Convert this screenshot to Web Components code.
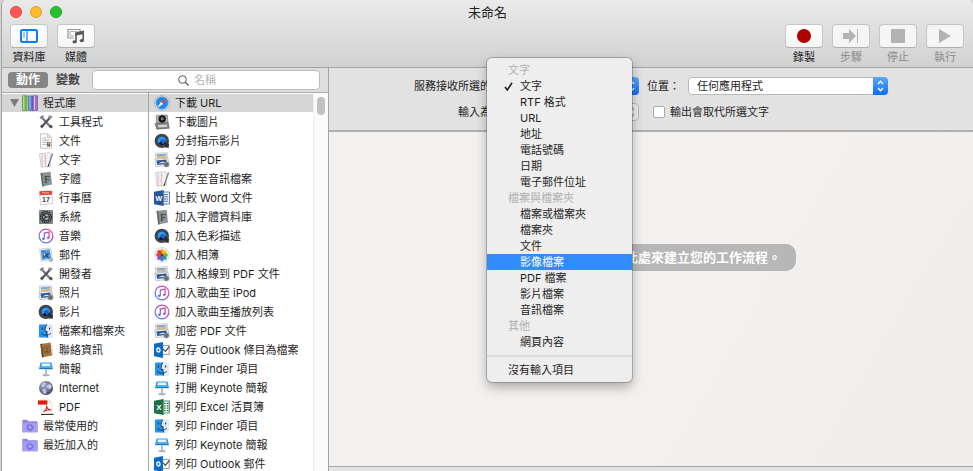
<!DOCTYPE html>
<html lang="zh-Hant">
<head>
<meta charset="utf-8">
<title>未命名</title>
<style>
  body {
    margin: 0;
    padding-left: 1px;
    background: #d4d4d4;
    font-family: Inter, "Noto Sans CJK TC", sans-serif;
    font-size: 11px;
    line-height: 16px;
    color: #1e1e1e;
  }
</style>
</head>
<body>
<automator-window></automator-window>

<script>
const ICONS = {
  tools: `
    <path d="M3 2.5 13 13.6" stroke="#77777f" stroke-width="2.2"/>
    <path d="M12.6 3 4 12.6" stroke="#55555e" stroke-width="2.2"/>
    <path d="M10.6 1.8c2-.9 4 .3 4.2 2l-1.6-.4-1 1.4-1.8-.8z" fill="#8b8b94"/>
    <path d="M1.4 3.6 4.4 1l1.8 1.6-3 2.8z" fill="#8b8b94"/>
    <path d="M2 12.2 4 10.4l1.8 1.8-2 2.2zM11 12l2-1.6 1.8 2.4-1.4 1.6z" fill="#4b4b55"/>`,
  doc: `
    <path d="M2.5.8h7l4 4v10.4h-11z" fill="#fbfbfb" stroke="#c2c2c2"/>
    <path d="M9.5.8v4h4z" fill="#ddd" stroke="#c2c2c2" stroke-width=".6"/>
    <path d="M4.5 5h3.5M4.5 7.2h7M4.5 9.4h4M4.5 11.6h4" stroke="#b5b5b5"/>
    <path d="M9 9h3.4v4.6H9z" fill="#7d5a41"/><circle cx="10.7" cy="10.6" r="1" fill="#e0b48c"/>`,
  text: `
    <path d="M1.5 1.6 12 .8l.6 13.4-9.4 1z" fill="#f8f8f8" stroke="#c6c6c6" stroke-width=".8"/>
    <path d="M4 2v12.6M7.4 1.8v12.6" stroke="#e79a9a" stroke-width=".8"/>
    <path d="M5 4.2h5M5 6.4h5M5 8.6h4M5 10.8h4" stroke="#d4d4da" stroke-width=".8"/>
    <path d="m14.6 1.6-4.2 12" stroke="#85858c" stroke-width="1.5"/>
    <path d="m10.8 12.6-.9 2.4" stroke="#222"/>`,
  font: `
    <path d="m2.6 2 10-1.2 1.4 12.8-9.8 1.8z" fill="#8b9493"/>
    <path d="m2.6 2 1.8-.2 1.4 13.4-1.6.2z" fill="#626c6b"/>
    <text x="9" y="12" text-anchor="middle" font-family="Liberation Serif" font-size="11" fill="#2c3434">F</text>`,
  calendar: `
    <path d="M1.6 1.4 13.8 1l.7 12.4-12 1.4z" fill="#fdfdfd" stroke="#bdbdbd" stroke-width=".7"/>
    <path d="m1.5 1.2 12.3-.5.3 4-12.4.5z" fill="#e5463b"/>
    <path d="M4 2.8h7" stroke="#f7b7b0" stroke-width=".8"/>
    <text x="8" y="12.4" text-anchor="middle" font-family="Liberation Sans" font-size="7" font-weight="bold" fill="#444">17</text>`,
  system: `
    <rect x="1" y="1" width="14" height="14" rx="1" fill="#7c8488"/>
    <circle cx="8" cy="8" r="5.2" fill="#b3b9bc" stroke="#262a2c" stroke-width="1.6" stroke-dasharray="1.8 .4"/>
    <circle cx="8" cy="8" r="3.4" fill="none" stroke="#25292b" stroke-width="1.1"/>
    <path d="M8 8 4.8 5M8 8h4M8 8l-3 3.2" stroke="#25292b" stroke-width="1.1"/>`,
  itunes: `
    <circle cx="8" cy="8" r="6.9" fill="#fff" stroke="url(#it)" stroke-width="1.3"/>
    <path d="M6.3 10.6V5l4.8-1v5.7" fill="none" stroke="url(#it)" stroke-width="1.3"/>
    <ellipse cx="5.4" cy="10.8" rx="1.4" ry="1.1" fill="#6d5be0"/>
    <ellipse cx="10.2" cy="9.8" rx="1.4" ry="1.1" fill="#b04fd0"/>
    <defs><linearGradient id="it" x1="1" y1="0" x2="0" y2="1">
      <stop stop-color="#f0508a"/><stop offset=".5" stop-color="#a055d8"/><stop offset="1" stop-color="#3c9ff0"/>
    </linearGradient></defs>`,
  mail: `
    <path d="m1.6 2.2 11-1.2 1.8 11.4-11 1.8z" fill="#fff" stroke="#bcc3c9" stroke-width=".8"/>
    <path d="m2.6 3.2 9.2-1 1.4 9.4-9.2 1.4z" fill="#4f9ae0"/>
    <path d="m4 3.4 4 3.4 4-.6-2.8 2.2 2.2 3-4-2.2-2.8 2.4 1.4-3.8z" fill="#1e3f74"/>
    <path d="m5 4.4 2.6 3-.8 2z" fill="#e8e2d3"/>
    <circle cx="12.8" cy="12.8" r="1.8" fill="#b8bec4" stroke="#8b9298" stroke-width=".6"/>`,
  preview: `
    <path d="m1.5 1.2 11.8-.4.4 6-11.8 1.2z" fill="#fff" stroke="#b8b8b8" stroke-width=".7"/>
    <path d="m2.6 2.2 9.8-.4.1 1.8-9.8.9z" fill="#7fa6d6"/>
    <path d="m2.8 4.6 9.6-.8.2 2-9.6 1z" fill="#d9b679"/>
    <path d="M.8 7.2 13.8 6l1.4 7.4-13.2 1.2z" fill="#f3f5f8" stroke="#a4acb8" stroke-width=".7"/>
    <path d="m2.4 8.6 10-1 .9 4.2-10 1.2z" fill="#2e5791"/>
    <path d="m4 11.4 4.4-2 3.2 1.4z" fill="#dfe8f4"/>
    <circle cx="12.4" cy="12.4" r="2.6" fill="#6a6e75" stroke="#a9acb2" stroke-width=".7"/>`,
  quicktime: `
    <circle cx="7.8" cy="7.9" r="7.2" fill="#3f444d"/>
    <path d="m9.8 9.6 5.2 1.2-.2 4-3.4-.4z" fill="#2b3038"/>
    <circle cx="7.8" cy="7.7" r="4.2" fill="#0b1322"/>
    <path d="M7.8 3.5a4.2 4.2 0 0 0-4.2 4.2c0 1 .4 2 1 2.7L8.4 7l3.6 1.4a4.2 4.2 0 0 0-4.2-4.9z" fill="#2f9df0"/>
    <path d="M5.6 7.6 9.4 5.8l2.2 2.6-2.4 3z" fill="#1467cf"/>`,
  finder: `
    <rect x="1" y="1.4" width="14" height="13.2" rx="1" fill="#dfeaf5"/>
    <path d="M2 1.4h6.6C7.4 3.8 7 6 7 8.4h2c0 2.2.1 4.2.8 6.2H2a1 1 0 0 1-1-1V2.4a1 1 0 0 1 1-1z" fill="#2494f0"/>
    <path d="M4.4 4.6v2M11.6 4.6v2" stroke="#12304f" stroke-width="1.1"/>
    <path d="M8.8 1.4C7.4 3.8 7 6 7 8.4h2c0 2.2.1 4.2.8 6.2M3.2 10.4c2.8 2.3 6.8 2.3 9.6 0" fill="none" stroke="#12304f" stroke-width=".9"/>`,
  contacts: `
    <path d="m2.4 2 10.2-1.4 1.4 13L4 15.4z" fill="#a27443"/>
    <path d="m2.4 2 1.6-.2L5.6 15l-1.6.4z" fill="#6d4a26"/>
    <circle cx="9" cy="7.8" r="3.4" fill="none" stroke="#7b5731" stroke-width=".8"/>
    <circle cx="9" cy="6.9" r="1.2" fill="#7b5731"/><path d="M6.8 9.8c1-1.4 3.4-1.5 4.5-.2L9.2 11z" fill="#7b5731"/>
    <path d="M14 3v2.4M14.3 7v2.4M14.6 11v2" stroke="#d8c8a8"/>`,
  keynote: `
    <path d="M2.6 1.4h10.8l1.4 5.4H1.2z" fill="#2ba2e8"/>
    <path d="M4 2.6h8l.6 2.6H3.4z" fill="#e9f6ff"/>
    <path d="M1.2 6.8h13.6v1.4H1.2z" fill="#1a7bbd"/>
    <path d="M7.2 8.2h1.6v5.2H7.2z" fill="#93b3c6"/>
    <ellipse cx="8" cy="14.2" rx="3.6" ry="1.1" fill="#a9b5bd"/>`,
  internet: `
    <circle cx="8" cy="8" r="7" fill="url(#gl)"/>
    <path d="m3 5 3-2.6 2 .8-1 2.2-2.4 1.4zM8.6 6l3.2-2.4 2.2 3-1.8 2.8-2.4-.6zM4.4 9.2l3-.2 1.2 2.4-1.4 2.6-2-1.2z" fill="#cdd2e6"/>
    <path d="M1.4 8h13.2M8 1v14M3 3.6c3 2 7 2 10 0M3 12.4c3-2 7-2 10 0" fill="none" stroke="#8f96bd" stroke-width=".5"/>
    <defs><radialGradient id="gl" cx=".35" cy=".3" r=".8"><stop stop-color="#a9b0cf"/><stop offset="1" stop-color="#34395f"/></radialGradient></defs>`,
  pdf: `
    <path d="M3 .8h8l3 3v11.4H3z" fill="#fafafa" stroke="#d5d5d5" stroke-width=".6"/>
    <path d="M11 .8v3h3" fill="#ddd"/>
    <path d="M0 1.4h9.4v4.2H0z" fill="#e31b12"/>
    <path d="M5.4 12.8c2-1.2 3.4-4 3.2-6.2 0 3 2.4 4.6 4.6 4.4-2.6-.6-5 .2-7.8 1.8z" fill="none" stroke="#dc2a20" stroke-width="1.1"/>
    <path d="M3 15.4h12.6" stroke="#222"/>`,
  library: `
    <path d="M.4.8h5v14.6h-5z" fill="#6fb552" stroke="#4b7f38" stroke-width=".6"/>
    <path d="M1.8 1v14.2" stroke="#c9ecb2"/>
    <path d="M5.6 1.6h1v13.8h-1z" fill="#f2efe6"/>
    <path d="M6.6 1h4.2v14.4H6.6z" fill="#4a7bd0" stroke="#2e4f8e" stroke-width=".6"/>
    <path d="M8 1.2v14" stroke="#b0ccf6"/>
    <path d="M11 .8h4.6v14.6H11z" fill="#a56dd2" stroke="#6b4291" stroke-width=".6"/>
    <path d="M12.4 1v14.2" stroke="#e2c8f4"/>`,
  folder: `
    <path d="M.4 2.6c0-.6.3-.9.9-.9H5l1.2 1.5h8.5c.6 0 .9.3.9.9v9.3c0 .6-.3.9-.9.9H1.3c-.6 0-.9-.3-.9-.9z" fill="#8f84e4"/>
    <path d="M.4 4.8h15.2v8.6c0 .6-.3.9-.9.9H1.3c-.6 0-.9-.3-.9-.9z" fill="#a79ef2"/>
    <circle cx="8" cy="9.4" r="2.4" fill="none" stroke="#7b70d4" stroke-width="1.2"/>
    <circle cx="8" cy="9.4" r="3.4" fill="none" stroke="#7b70d4" stroke-width=".9" stroke-dasharray="1.4 1.27"/>`,
  safari: `
    <circle cx="8" cy="8" r="7.5" fill="#eceef0" stroke="#a0a4a9" stroke-width=".7"/>
    <circle cx="8" cy="8" r="6.4" fill="#2187e8"/>
    <circle cx="8" cy="8" r="5.4" fill="none" stroke="#8cc6f8" stroke-width=".8" stroke-dasharray=".5 1"/>
    <path d="M13 3 9.1 9.1 6.9 6.9z" fill="#f0433a"/><path d="M3 13 9.1 9.1 6.9 6.9z" fill="#fff"/>`,
  capture: `
    <path d="m2.2 1.4 11-.4 1 8.6-11.6.6z" fill="#aeb1b2" stroke="#77797a" stroke-width=".7"/>
    <circle cx="8.2" cy="5" r="3.7" fill="#17191a"/>
    <circle cx="8.2" cy="4.8" r="1.4" fill="#b5b8ba"/><circle cx="8.2" cy="4.8" r=".7" fill="#111"/>
    <path d="M1.2 9.4 14 8.8l1.2 5.4-12.4 1z" fill="#85888a" stroke="#4c4f50" stroke-width=".6"/>
    <path d="m4 11 8.6-.6.6 2.4-8.6.6z" fill="#cfd1d2"/>`,
  photos: `
    <circle cx="8" cy="8" r="7.3" fill="#fff" stroke="#bcbcbc" stroke-width=".7"/>
    <ellipse cx="8" cy="4.6" rx="2" ry="2.7" fill="#f5951a"/>
    <ellipse cx="8" cy="4.6" rx="2" ry="2.7" fill="#e6cc1e" transform="rotate(45 8 8)"/>
    <ellipse cx="8" cy="4.6" rx="2" ry="2.7" fill="#7cbc32" transform="rotate(90 8 8)"/>
    <ellipse cx="8" cy="4.6" rx="2" ry="2.7" fill="#2f9f78" transform="rotate(135 8 8)"/>
    <ellipse cx="8" cy="4.6" rx="2" ry="2.7" fill="#3c7fcc" transform="rotate(180 8 8)"/>
    <ellipse cx="8" cy="4.6" rx="2" ry="2.7" fill="#7d55b4" transform="rotate(225 8 8)"/>
    <ellipse cx="8" cy="4.6" rx="2" ry="2.7" fill="#cc4490" transform="rotate(270 8 8)"/>
    <ellipse cx="8" cy="4.6" rx="2" ry="2.7" fill="#ee3a2c" transform="rotate(315 8 8)"/>
    <circle cx="8" cy="8" r="1.3" fill="#6b3430"/>`,
  word: `
    <path d="M8 2h7.4v12H8z" fill="#fff" stroke="#2b569a" stroke-width=".8"/>
    <path d="M9 4.6h5M9 6.8h5M9 9h5M9 11.2h5" stroke="#2b569a" stroke-width=".9"/>
    <path d="M0 1.8 9.6 0v16L0 14.2z" fill="#2b569a"/>
    <text x="4.8" y="10.6" text-anchor="middle" font-family="Liberation Sans" font-size="7" font-weight="bold" fill="#fff">W</text>`,
  excel: `
    <path d="M8 2h7.4v12H8z" fill="#fff" stroke="#1f7145" stroke-width=".8"/>
    <path d="M10 4.4h1.6M12.6 4.4h2M10 6.8h1.6M12.6 6.8h2M10 9.2h1.6M12.6 9.2h2M10 11.6h1.6M12.6 11.6h2" stroke="#1f7145" stroke-width="1.3"/>
    <path d="M0 1.8 9.6 0v16L0 14.2z" fill="#1f7145"/>
    <text x="4.8" y="11" text-anchor="middle" font-family="Liberation Sans" font-size="8" font-weight="bold" fill="#fff">X</text>`,
  outlook: `
    <path d="M8 3.4h7.2v9H8z" fill="#fff" stroke="#8a8a8a" stroke-width=".9"/>
    <path d="m9 6.8 2.4 2.6 4-5" fill="none" stroke="#444" stroke-width="1.2"/>
    <path d="M0 1.8 9 0v16l-9-1.8z" fill="#0a6cc4"/>
    <ellipse cx="4.4" cy="8" rx="1.6" ry="2" fill="none" stroke="#fff" stroke-width="1.3"/>`
};

class AppIcon extends HTMLElement {
  connectedCallback() {
    this.attachShadow({ mode: 'open' }).innerHTML = `
      <style>
        :host { display: block; width: 16px; height: 16px; flex: none; }
        svg { display: block; }
      </style>
      <svg width="16" height="16" viewBox="0 0 16 16" fill="none" aria-hidden="true">${ICONS[this.getAttribute('name')]}</svg>
    `;
  }
}

class ToolButton extends HTMLElement {
  connectedCallback() {
    const disabled = this.hasAttribute('disabled') ? 'disabled' : '';
    this.attachShadow({ mode: 'open' }).innerHTML = `
      <style>
        :host { display: block; width: 38px; }
        button {
          display: flex;
          flex-direction: column;
          align-items: center;
          gap: 1px;
          width: 100%;
          padding: 0;
          border: 0;
          background: none;
          font: inherit;
          color: #222;
          white-space: nowrap;
        }
        button:disabled { color: #8a8a8a; }
        .face {
          box-sizing: border-box;
          display: grid;
          place-items: center;
          width: 100%;
          height: 24px;
          border: 1px solid #c6c6c6;
          border-bottom-color: #b0b0b0;
          border-radius: 4px;
          background: linear-gradient(#fff, #f4f4f4);
        }
        :disabled .face { background: #f5f5f5; }
      </style>
      <button type="button" ${disabled}>
        <span class="face"><slot name="icon"></slot></span>
        <span><slot></slot></span>
      </button>
    `;
  }
}

class TitleBar extends HTMLElement {
  connectedCallback() {
    this.attachShadow({ mode: 'open' }).innerHTML = `
      <style>
        :host {
          display: block;
          background: linear-gradient(#eaeaea, #d1d1d1);
          border-bottom: 1px solid #a3a3a3;
        }
        .title {
          display: grid;
          grid-template-columns: 1fr auto 1fr;
          align-items: center;
          height: 24px;
          padding: 0 8px;
        }
        .lights { display: flex; gap: 8px; }
        .lights button {
          box-sizing: border-box;
          width: 12px;
          height: 12px;
          padding: 0;
          border: 1px solid #e0443e;
          border-radius: 50%;
          background: #fc5753;
        }
        .lights .min { background: #fdbc2c; border-color: #dfa023; }
        .lights .max { background: #28c132; border-color: #1ca527; }
        h1 { margin: 0; font-size: 13px; font-weight: 400; line-height: 20px; }
        .tools { display: flex; gap: 9px; padding: 0 9px 2px 8px; }
        .space { flex: 1; }
        svg { display: block; }
      </style>
      <div class="title">
        <div class="lights">
          <button type="button" aria-label="關閉"></button>
          <button type="button" class="min" aria-label="縮到最小"></button>
          <button type="button" class="max" aria-label="縮放"></button>
        </div>
        <h1>未命名</h1>
      </div>
      <div class="tools">
        <tool-button>
          <svg slot="icon" width="18" height="14" viewBox="0 0 18 14" fill="none" stroke="#0a7aff">
            <rect x="1" y="1" width="16" height="12" rx="1.5" stroke-width="2"/>
            <path d="M7 1v12" stroke-width="1.2"/><path d="M3 4h2M3 6h2M3 8h2" stroke-width=".8"/>
          </svg>
          資料庫
        </tool-button>
        <tool-button>
          <svg slot="icon" width="18" height="16" viewBox="0 0 18 16" fill="none">
            <path d="M6.5 10H1V1.5h12V4" stroke="#999" stroke-width="1.2"/>
            <path d="M7 8H3V3.5h7.5V5" stroke="#b0b0b0"/>
            <path d="M9 13.4V5.2l7.2-1.6v8.8" stroke="#595959" stroke-width="1.6"/>
            <path d="M8.4 4.8 17 3v3L8.4 7.8z" fill="#595959"/>
            <ellipse cx="7.6" cy="13.8" rx="2.2" ry="1.6" fill="#595959"/>
            <ellipse cx="14.8" cy="12.6" rx="2.2" ry="1.6" fill="#595959"/>
          </svg>
          媒體
        </tool-button>
        <span class="space"></span>
        <tool-button>
          <svg slot="icon" width="14" height="14"><circle cx="7" cy="7" r="7" fill="#b00000"/></svg>
          錄製
        </tool-button>
        <tool-button disabled>
          <svg slot="icon" width="16" height="14" fill="#b3b3b3"><path d="M0 4h6V0l7 7-7 7v-4H0zM14 0h1v14h-1z"/></svg>
          步驟
        </tool-button>
        <tool-button disabled>
          <svg slot="icon" width="14" height="14"><path d="M0 0h14v14H0z" fill="#b3b3b3"/></svg>
          停止
        </tool-button>
        <tool-button disabled>
          <svg slot="icon" width="12" height="14"><path d="M0 0l12 7-12 7z" fill="#b3b3b3"/></svg>
          執行
        </tool-button>
      </div>
    `;
  }
}

class SourceRow extends HTMLElement {
  connectedCallback() {
    this.setAttribute('role', 'listitem');
    this.attachShadow({ mode: 'open' }).innerHTML = `
      <style>
        :host {
          display: flex;
          align-items: center;
          gap: 5px;
          height: 18px;
          margin-bottom: 1px;
          padding-left: var(--indent, 5px);
          line-height: 18px;
          white-space: nowrap;
        }
        :host([level="1"]) { --indent: 20px; }
        :host([level="2"]) { --indent: 36px; }
        :host([open]) { --indent: 7px; }
        :host([selected]) { background: #d6d6d6; }
        .twisty { display: none; margin-right: -2px; }
        :host([open]) .twisty { display: block; }
      </style>
      <svg class="twisty" width="10" height="9"><path d="M1 0h9L5.500 8z" fill="#7c7c7c"/></svg>
      <app-icon name="${this.getAttribute('icon')}"></app-icon>
      <slot></slot>
    `;
  }
}

class LibraryPanel extends HTMLElement {
  constructor() {
    super();
    this.categories = [
      ['tools', '工具程式'], ['doc', '文件'], ['text', '文字'], ['font', '字體'],
      ['calendar', '行事曆'], ['system', '系統'], ['itunes', '音樂'], ['mail', '郵件'],
      ['tools', '開發者'], ['preview', '照片'], ['quicktime', '影片'], ['finder', '檔案和檔案夾'],
      ['contacts', '聯絡資訊'], ['keynote', '簡報'], ['internet', 'Internet'], ['pdf', 'PDF']
    ];
    this.actions = [
      ['safari', '下載 URL'], ['capture', '下載圖片'], ['quicktime', '分封指示影片'],
      ['preview', '分割 PDF'], ['text', '文字至音訊檔案'], ['word', '比較 Word 文件'],
      ['font', '加入字體資料庫'], ['quicktime', '加入色彩描述'], ['photos', '加入相簿'],
      ['preview', '加入格線到 PDF 文件'], ['itunes', '加入歌曲至 iPod'], ['itunes', '加入歌曲至播放列表'],
      ['preview', '加密 PDF 文件'], ['outlook', '另存 Outlook 條目為檔案'], ['finder', '打開 Finder 項目'],
      ['keynote', '打開 Keynote 簡報'], ['excel', '列印 Excel 活頁簿'], ['finder', '列印 Finder 項目'],
      ['keynote', '列印 Keynote 簡報'], ['outlook', '列印 Outlook 郵件']
    ];
    this.attachShadow({ mode: 'open' });
  }

  connectedCallback() {
    this.shadowRoot.innerHTML = `
      <style>
        :host {
          display: flex;
          flex-direction: column;
          flex: none;
          width: 326px;
          min-height: 0;
          border-right: 1px solid #a3a3a3;
          background: #fff;
        }
        .filter {
          display: flex;
          align-items: center;
          gap: 9px;
          height: 24px;
          padding: 0 8px 0 6px;
          background: #dedede;
          border-bottom: 1px solid #a8a8a8;
        }
        .filter button {
          padding: 0;
          border: 0;
          border-radius: 4px;
          background: none;
          font: inherit;
          font-size: 12px;
          font-weight: 700;
          color: #444;
        }
        .filter .on { padding: 0 8px; margin-right: -1px; background: #858585; color: #fff; }
        .search {
          box-sizing: border-box;
          display: flex;
          align-items: center;
          gap: 5px;
          flex: 1;
          min-width: 0;
          height: 20px;
          margin-left: 3px;
          padding-left: 85px;
          border: 1px solid #bcbcbc;
          border-radius: 4px;
          background: #fff;
        }
        .search svg { flex: none; }
        input {
          flex: 1;
          min-width: 0;
          padding: 0;
          border: 0;
          outline: 0;
          background: none;
          font: inherit;
        }
        input::placeholder { color: #b5b5b5; }
        .lists {
          display: grid;
          grid-template-columns: 147px 1fr 15px;
          flex: 1;
          min-height: 0;
        }
        .list { overflow: hidden; padding-top: 1px; }
        .list:first-child { border-right: 1px solid #a8a8a8; }
        .track { padding: 4px 3px; background: #fafafa; border-left: 1px solid #ededed; }
        .thumb { width: 8px; height: 18px; border-radius: 4px; background: #c1c1c1; }
      </style>
      <div class="filter">
        <button type="button" class="on">動作</button>
        <button type="button">變數</button>
        <label class="search">
          <svg width="11" height="11" viewBox="0 0 11 11" fill="none" stroke="#555">
            <circle cx="4.5" cy="4.5" r="3.8"/><path d="m7.3 7.3 3.2 3.2" stroke-width="1.3"/>
          </svg>
          <input type="text" placeholder="名稱" aria-label="名稱">
        </label>
      </div>
      <div class="lists">
        <div class="list" role="list">
          <source-row icon="library" open selected>程式庫</source-row>
          ${this.categories.map(([icon, text]) => `<source-row icon="${icon}" level="2">${text}</source-row>`).join('')}
          <source-row icon="folder" level="1">最常使用的</source-row>
          <source-row icon="folder" level="1">最近加入的</source-row>
        </div>
        <div class="list" role="list">
          ${this.actions.map(([icon, text], i) => `<source-row icon="${icon}" ${i === 0 ? 'selected' : ''}>${text}</source-row>`).join('')}
        </div>
        <div class="track"><div class="thumb"></div></div>
      </div>
    `;
  }
}

class PopupMenu extends HTMLElement {
  connectedCallback() {
    this.attachShadow({ mode: 'open' }).innerHTML = `
      <style>
        :host {
          display: block;
          width: 145px;
          padding: 4px 0;
          border-radius: 5px;
          background: #eee;
          box-shadow: 0 0 0 1px rgba(0, 0, 0, .2), 0 5px 12px rgba(0, 0, 0, .3);
        }
        h2 { margin: 0; padding-left: 21px; font-size: 11px; font-weight: 400; color: #b0b0b0; }
        button {
          display: flex;
          align-items: center;
          width: 100%;
          height: 16px;
          padding: 0 0 0 33px;
          border: 0;
          background: none;
          font: inherit;
          color: inherit;
          text-align: left;
        }
        .checked { padding-left: 17px; gap: 7px; }
        .active { background: #338cfe; color: #fff; }
        .top { padding-left: 21px; }
        hr { margin: 5px 0; border: 0; height: 2px; background: #dcdcdc; }
      </style>
      <h2>文字</h2>
      <button type="button" class="checked">
        <svg width="9" height="9" viewBox="0 0 9 9" fill="none" stroke="#222" stroke-width="1.6"><path d="M1 5l2.3 3L8 .8"/></svg>文字
      </button>
      ${this.items('RTF 格式', 'URL', '地址', '電話號碼', '日期', '電子郵件位址')}
      <h2>檔案與檔案夾</h2>
      ${this.items('檔案或檔案夾', '檔案夾', '文件')}
      <button type="button" class="active">影像檔案</button>
      ${this.items('PDF 檔案', '影片檔案', '音訊檔案')}
      <h2>其他</h2>
      ${this.items('網頁內容')}
      <hr>
      <button type="button" class="top">沒有輸入項目</button>
    `;
  }

  items(...names) {
    return names.map(name => `<button type="button">${name}</button>`).join('');
  }
}

class ServiceOptions extends HTMLElement {
  connectedCallback() {
    const arrows = '<svg width="15" height="18" viewBox="0 0 15 18" fill="none"><path d="M5 7l2.5-2.8L10 7M5 11l2.5 2.8L10 11" stroke="currentColor" stroke-width="1.3"/></svg>';
    this.attachShadow({ mode: 'open' }).innerHTML = `
      <style>
        :host {
          display: grid;
          grid-template-columns: auto 129px auto 200px;
          justify-content: center;
          align-items: center;
          gap: 8px;
          padding: 9px 0;
          background: #e2e2e2;
          border-bottom: 2px solid #b0b0b0;
          white-space: nowrap;
        }
        label { text-align: right; }
        .pop { display: grid; position: relative; }
        .pop > select, .pop > .knob { grid-area: 1 / 1; }
        select {
          appearance: none;
          box-sizing: border-box;
          width: 100%;
          height: 18px;
          padding: 0 20px 0 8px;
          border: 1px solid #b9b9b9;
          border-radius: 4px;
          background: #fff;
          font: inherit;
          color: inherit;
        }
        select:disabled { background: #ececec; color: #a5a5a5; opacity: 1; }
        .knob {
          justify-self: end;
          width: 15px;
          height: 18px;
          border-radius: 0 4px 4px 0;
          background: linear-gradient(#5aa9fb, #0a6dfb);
          color: #fff;
          pointer-events: none;
        }
        .off .knob { background: none; color: #a5a5a5; }
        .knob svg { display: block; }
        popup-menu { position: absolute; top: -19px; left: -23px; z-index: 2; }
        .check {
          grid-column: 3 / 5;
          display: flex;
          align-items: center;
          gap: 5px;
          padding-left: 6px;
        }
        input {
          appearance: none;
          box-sizing: border-box;
          width: 12px;
          height: 12px;
          margin: 0;
          border: 1px solid #a9a9a9;
          border-radius: 2px;
          background: #fff;
        }
      </style>
      <label for="receives">服務接收所選的：</label>
      <div class="pop">
        <select id="receives"><option>文字</option></select>
        <span class="knob">${arrows}</span>
        <popup-menu></popup-menu>
      </div>
      <label for="place">位置：</label>
      <div class="pop">
        <select id="place"><option>任何應用程式</option></select>
        <span class="knob">${arrows}</span>
      </div>
      <label for="input-as">輸入為：</label>
      <div class="pop off">
        <select id="input-as" disabled><option>文字</option></select>
        <span class="knob">${arrows}</span>
      </div>
      <label class="check"><input type="checkbox">輸出會取代所選文字</label>
    `;
  }
}

class AutomatorWindow extends HTMLElement {
  connectedCallback() {
    this.attachShadow({ mode: 'open' }).innerHTML = `
      <style>
        :host {
          box-sizing: border-box;
          display: flex;
          flex-direction: column;
          height: 100vh;
          border-left: 1px solid #a3a3a3;
          border-radius: 5px 5px 0 0;
          overflow: hidden;
          background: #e3e3e3;
        }
        .body { display: flex; flex: 1; min-height: 0; }
        main { display: flex; flex-direction: column; flex: 1; min-width: 0; }
        .canvas {
          display: grid;
          place-items: center;
          flex: 1;
          padding-bottom: 84px;
          margin-bottom: 4px;
          background: linear-gradient(120deg, #f3f1f0, #f3f0ee 60%, #efeeec);
          border-bottom: 1px solid #a3a3a3;
        }
        .hint {
          margin: 0;
          padding: 5px 15px;
          border-radius: 10px;
          background: #b7b7b7;
          color: #fff;
          font-size: 13px;
          font-weight: 700;
          line-height: 17px;
          white-space: nowrap;
        }
      </style>
      <title-bar></title-bar>
      <div class="body">
        <library-panel></library-panel>
        <main>
          <service-options></service-options>
          <div class="canvas"><p class="hint">將動作或檔案拖到此處來建立您的工作流程。</p></div>
        </main>
      </div>
    `;
  }
}

customElements.define('app-icon', AppIcon);
customElements.define('tool-button', ToolButton);
customElements.define('title-bar', TitleBar);
customElements.define('source-row', SourceRow);
customElements.define('library-panel', LibraryPanel);
customElements.define('popup-menu', PopupMenu);
customElements.define('service-options', ServiceOptions);
customElements.define('automator-window', AutomatorWindow);
</script>
</body>
</html>
